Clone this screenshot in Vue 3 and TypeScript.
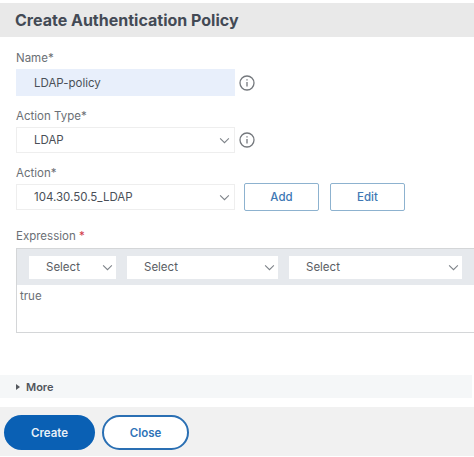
<script setup lang="ts">
const exprSelects = [
  { label: 'Select', cls: 'e1' },
  { label: 'Select', cls: 'e2' },
  { label: 'Select', cls: 'e3' },
]
</script>

<template>
  <div class="page">
    <header class="head"><h1>Create Authentication Policy</h1></header>

    <div class="form">
      <label class="lab first">Name*</label>
      <div class="row">
        <div class="input">LDAP-policy</div>
        <svg class="info" viewBox="0 0 16 16"><circle cx="8" cy="8" r="7" /><path d="M8 7v4.5" /><path d="M8 4.2v1.3" /></svg>
      </div>

      <label class="lab">Action Type*</label>
      <div class="row">
        <div class="select">
          <span>LDAP</span>
          <svg class="chev" viewBox="0 0 12 8"><path d="M1 1.5l5 5 5-5" /></svg>
        </div>
        <svg class="info" viewBox="0 0 16 16"><circle cx="8" cy="8" r="7" /><path d="M8 7v4.5" /><path d="M8 4.2v1.3" /></svg>
      </div>

      <label class="lab">Action*</label>
      <div class="row">
        <div class="select">
          <span>104.30.50.5_LDAP</span>
          <svg class="chev" viewBox="0 0 12 8"><path d="M1 1.5l5 5 5-5" /></svg>
        </div>
        <button class="btn add">Add</button>
        <button class="btn edit">Edit</button>
      </div>

      <label class="lab expr">Expression<span class="req"> *</span></label>
    </div>

    <div class="box">
      <div class="bar">
        <div v-for="(s, i) in exprSelects" :key="i" class="esel" :class="s.cls">
          <span>{{ s.label }}</span>
          <svg class="chev" viewBox="0 0 12 8"><path d="M1 1.5l5 5 5-5" /></svg>
        </div>
      </div>
      <div class="text">true</div>
    </div>

    <div class="more"><i class="tri"></i>More</div>

    <footer class="foot">
      <button class="pill primary">Create</button>
      <button class="pill ghost">Close</button>
    </footer>
  </div>
</template>

<style>
html, body { margin: 0; background: #fff; }
</style>

<style scoped>
.page {
  width: 474px;
  height: 457px;
  overflow: hidden;
  padding-top: 3px;
  box-sizing: border-box;
  font-family: Inter, "Liberation Sans", sans-serif;
  color: #4a4f57;
  font-size: 11.5px;
}
.head {
  height: 34px;
  background: #e9e9e9;
  display: flex;
  align-items: center;
  padding-left: 15px;
}
h1 {
  margin: 0;
  font-size: 16px;
  font-weight: 700;
  color: #434a55;
}
.form { padding: 0 0 0 16px; }
.lab {
  display: block;
  height: 14px;
  line-height: 14px;
  margin: 13px 0 4px;
  color: #6b6f75;
  font-size: 11.5px;
}
.lab.first { margin-top: 14px; }
.lab.expr { margin-top: 19px; }
.req { color: #d23a4a; }
.row { display: flex; align-items: center; }
.input, .select {
  width: 219px;
  box-sizing: border-box;
  display: flex;
  align-items: center;
  justify-content: space-between;
  padding: 0 3px 0 17px;
  color: #4a4f57;
  flex: none;
}
.input { background: #e8effb; height: 27px; padding-left: 18px; }
.select { border: 1px solid #eeeeee; background: #fff; height: 26px; }
.chev {
  width: 11px;
  height: 7px;
  fill: none;
  stroke: #7d8288;
  stroke-width: 1.2;
  flex: none;
}
.select .chev { margin-right: 1px; }
.info {
  width: 16px;
  height: 16px;
  margin-left: 4px;
  fill: none;
  stroke: #74787d;
  stroke-width: 1.3;
  flex: none;
}
.btn {
  height: 28px;
  width: 75px;
  margin-top: -1px;
  margin-bottom: -1px;
  box-sizing: border-box;
  border: 1px solid #8db2cf;
  border-radius: 2px;
  background: #fff;
  color: #3f78b4;
  font: 500 11.5px Inter, "Liberation Sans", sans-serif;
  padding: 0;
}
.add { margin-left: 9px; }
.edit { margin-left: 11px; }
.box {
  margin: 5px 0 0 16px;
  height: 85px;
  box-sizing: border-box;
  border: 1px solid #d4d6d8;
  border-right: 0;
}
.bar {
  height: 36px;
  box-sizing: border-box;
  background: #e6e9ed;
  display: flex;
  align-items: center;
  padding-left: 12px;
  gap: 11px;
}
.esel {
  height: 23px;
  background: #fff;
  box-sizing: border-box;
  display: flex;
  align-items: center;
  justify-content: space-between;
  color: #5a5e64;
  font-size: 11.5px;
  padding: 0 3px 0 17px;
  flex: none;
}
.e1 { width: 87px; }
.e2 { width: 151px; }
.e3 { width: 173px; }
.text {
  padding: 4px 0 0 3px;
  color: #6b6f75;
  font-size: 11.5px;
}
.more {
  margin-top: 42px;
  height: 23px;
  width: 472px;
  background: #f5f7f8;
  display: flex;
  align-items: center;
  padding-left: 16px;
  box-sizing: border-box;
  font-weight: 600;
  font-size: 11px;
  color: #50555c;
}
.tri {
  width: 0;
  height: 0;
  border-left: 4px solid #54585e;
  border-top: 3.5px solid transparent;
  border-bottom: 3.5px solid transparent;
  margin-right: 6px;
}
.foot {
  margin-top: 9px;
  height: 49px;
  box-sizing: border-box;
  background: #f1f1f1;
  display: flex;
  align-items: center;
  padding: 2px 0 0 4px;
  gap: 7px;
}
.pill {
  height: 35px;
  border-radius: 18px;
  box-sizing: border-box;
  font: 600 11.5px Inter, "Liberation Sans", sans-serif;
  padding: 0;
}
.primary { width: 91px; background: #0a60b4; border: 0; color: #e8f0f8; }
.ghost { width: 87px; background: #fff; border: 2px solid #2a6fb3; color: #2f74b8; }
</style>
